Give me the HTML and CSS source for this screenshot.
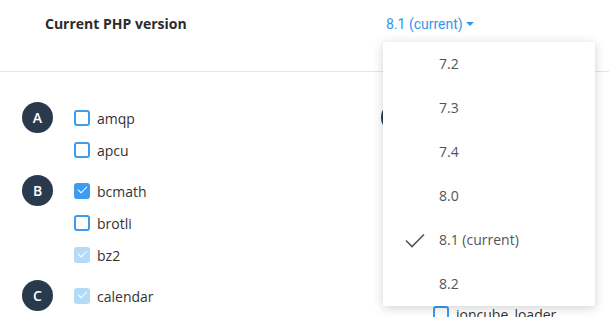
FILE: index.html
```html
<!DOCTYPE html>
<html lang="en">
<head>
  <meta charset="UTF-8">
  <meta name="viewport" content="width=device-width, initial-scale=1.0">
  <title>PHP extensions</title>
  <link rel="stylesheet" href="styles.css">
</head>
<body>
  <div class="php-header">
    <p class="php-label">Current PHP version</p>
    <div class="version-select">
      <button class="version-toggle">8.1 (current)<span class="caret"></span></button>
      <ul class="version-menu">
        <li>7.2</li>
        <li>7.3</li>
        <li>7.4</li>
        <li>8.0</li>
        <li class="selected">
          <svg class="tick" width="20" height="15" viewBox="0 0 20 15"><path d="M1 7.5 L7 13.5 L19 1.5" fill="none" stroke="#555" stroke-width="1.6"/></svg>
          8.1 (current)
        </li>
        <li>8.2</li>
      </ul>
    </div>
  </div>

  <div class="extensions">
    <div class="ext-column">
      <div class="ext-group">
        <div class="letter">A</div>
        <ul class="ext-list">
          <li><span class="box"></span>amqp</li>
          <li><span class="box"></span>apcu</li>
        </ul>
      </div>
      <div class="ext-group">
        <div class="letter">B</div>
        <ul class="ext-list">
          <li><span class="box checked"></span>bcmath</li>
          <li><span class="box"></span>brotli</li>
          <li><span class="box checked locked"></span>bz2</li>
        </ul>
      </div>
      <div class="ext-group">
        <div class="letter">C</div>
        <ul class="ext-list">
          <li><span class="box checked locked"></span>calendar</li>
        </ul>
      </div>
    </div>
    <div class="ext-column">
      <div class="ext-group">
        <div class="letter">I</div>
        <ul class="ext-list">
          <li><span class="box"></span>igbinary</li>
          <li><span class="box"></span>imagick</li>
          <li><span class="box"></span>imap</li>
          <li><span class="box"></span>inotify</li>
          <li><span class="box"></span>interbase</li>
          <li><span class="box"></span>intl</li>
          <li class="last"><span class="box"></span>ioncube_loader</li>
        </ul>
      </div>
    </div>
  </div>
</body>
</html>
```

FILE: styles.css
```css
html, body {
  margin: 0;
  padding: 0;
  width: 100%;
  height: 100%;
  overflow: hidden;
  background: #fff;
}
* {
  margin: 0;
  padding: 0;
  box-sizing: border-box;
}
ul {
  list-style: none;
}
body {
  font-family: "Open Sans", sans-serif;
  color: #333;
}
.php-header {
  display: grid;
  grid-template-columns: 341px 1fr;
  align-items: center;
  align-content: start;
  height: 72px;
  padding: 15px 0 0 45px;
  border-bottom: 1px solid #e6e6e6;
}
.php-label {
  font-size: 14px;
  font-weight: 700;
  line-height: 18px;
  color: #2b2b2b;
}
.version-select {
  position: relative;
  line-height: 18px;
}
.version-toggle {
  border: none;
  background: none;
  font-family: Roboto, sans-serif;
  font-size: 14px;
  color: #2f97ee;
  display: flex;
  align-items: center;
  cursor: pointer;
}
.caret {
  width: 0;
  height: 0;
  margin-left: 3px;
  border-left: 4px solid transparent;
  border-right: 4px solid transparent;
  border-top: 4px solid #2f97ee;
}
/* menu des versions */
.version-menu {
  position: absolute;
  top: 26px;
  left: -3px;
  width: 212px;
  background: #fff;
  box-shadow: 0 2px 10px rgba(0, 0, 0, 0.18);
  z-index: 2;
}
.version-menu li {
  position: relative;
  height: 44px;
  display: flex;
  align-items: center;
  padding-left: 56px;
  font-size: 14px;
  color: #555;
}
.tick {
  position: absolute;
  left: 22px;
  top: 15px;
}
.extensions {
  display: grid;
  grid-template-columns: 359px 1fr;
  padding: 30px 0 0 22px;
}
.ext-group {
  display: flex;
  align-items: flex-start;
  margin-bottom: 9px;
}
.letter {
  width: 31px;
  height: 31px;
  margin-right: 21px;
  border-radius: 50%;
  background: #2a3a4e;
  color: #fff;
  font-size: 14px;
  font-weight: 600;
  display: flex;
  align-items: center;
  justify-content: center;
  flex-shrink: 0;
}
.ext-list li {
  height: 32px;
  display: flex;
  align-items: center;
  font-size: 14px;
  color: #333;
}
.ext-list li.last {
  margin-top: 4px;
}
.box {
  width: 16px;
  height: 16px;
  margin-right: 7px;
  border: 2px solid #3d9bf0;
  border-radius: 3px;
  position: relative;
  flex-shrink: 0;
}
.box.checked {
  background: #3d9bf0;
}
.box.checked::after {
  content: '';
  position: absolute;
  left: 2px;
  top: 1px;
  width: 8px;
  height: 4px;
  border-left: 1.5px solid #fff;
  border-bottom: 1.5px solid #fff;
  transform: rotate(-45deg);
}
.box.locked {
  background: #b3dbf8;
  border-color: #b3dbf8;
}
```
